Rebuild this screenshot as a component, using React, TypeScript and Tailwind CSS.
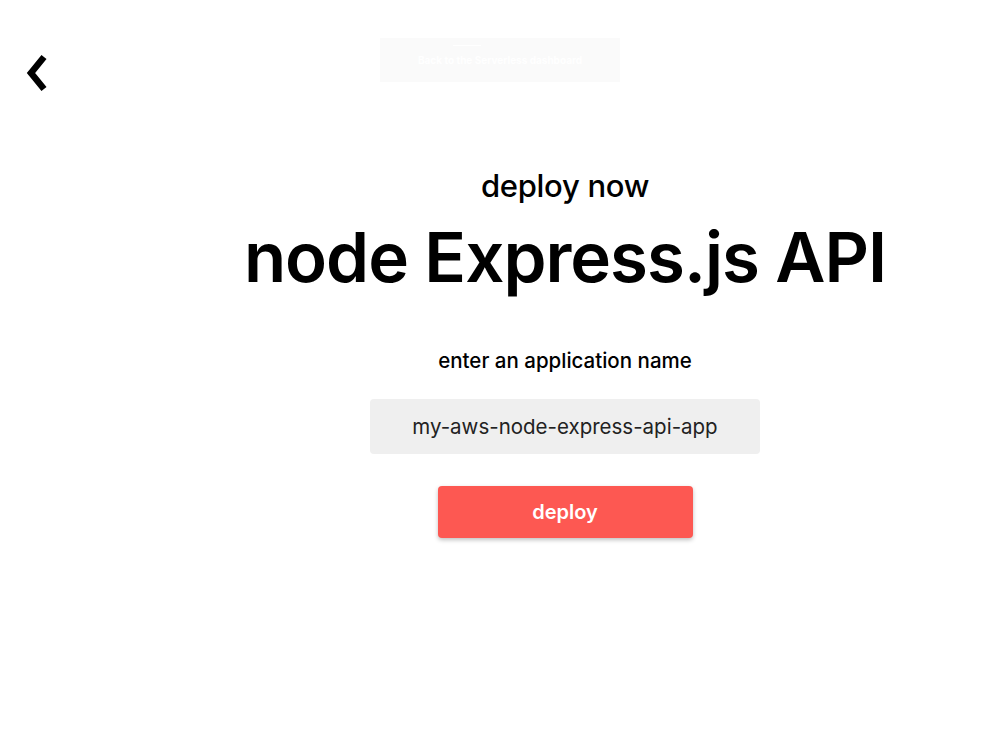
import { useState } from 'react';

const font = { fontFamily: 'Inter, Lato, "Noto Sans", sans-serif' };

const BackChevron = () => (
  <svg width="24" height="40" viewBox="0 0 24 40" fill="none">
    <path d="M19 4 L6 20 L19 36" stroke="#000" strokeWidth="6.5" strokeLinecap="butt" strokeLinejoin="miter" />
  </svg>
);

export default function App() {
  const [name, setName] = useState('my-aws-node-express-api-app');

  return (
    <div className="relative w-[1000px] h-[750px] bg-white text-black" style={font}>
      <button className="absolute left-[25px] top-[53px]">
        <BackChevron />
      </button>

      <div className="flex justify-center pt-[38px]">
        <div className="relative w-[240px] h-[44px] bg-[#fafafa] flex items-center justify-center">
          <span className="absolute top-[7px] left-[73px] w-[28px] h-[1px] bg-white" />
          <span className="text-[10px] font-bold text-white">Back to the Serverless dashboard</span>
        </div>
      </div>

      <div className="flex flex-col items-center pl-[130px] pt-[88px]">
        <h2 className="text-[31px] font-medium leading-none tracking-[-0.3px]">deploy now</h2>
        <h1 className="mt-[22px] text-[69px] font-semibold leading-none tracking-[-1px]">node Express.js API</h1>
        <p className="mt-[59px] text-[20.5px] font-medium leading-none">enter an application name</p>
        <input
          value={name}
          onChange={(e) => setName(e.target.value)}
          className="mt-[27px] w-[390px] h-[55px] rounded bg-[#efefef] text-center text-[20.5px] text-[#222] outline-none"
          style={font}
        />
        <button className="mt-[32px] w-[255px] h-[52px] rounded bg-[#fd5852] text-white text-[20px] font-semibold shadow-[0_2px_4px_rgba(0,0,0,0.25)]">
          deploy
        </button>
      </div>
    </div>
  );
}
